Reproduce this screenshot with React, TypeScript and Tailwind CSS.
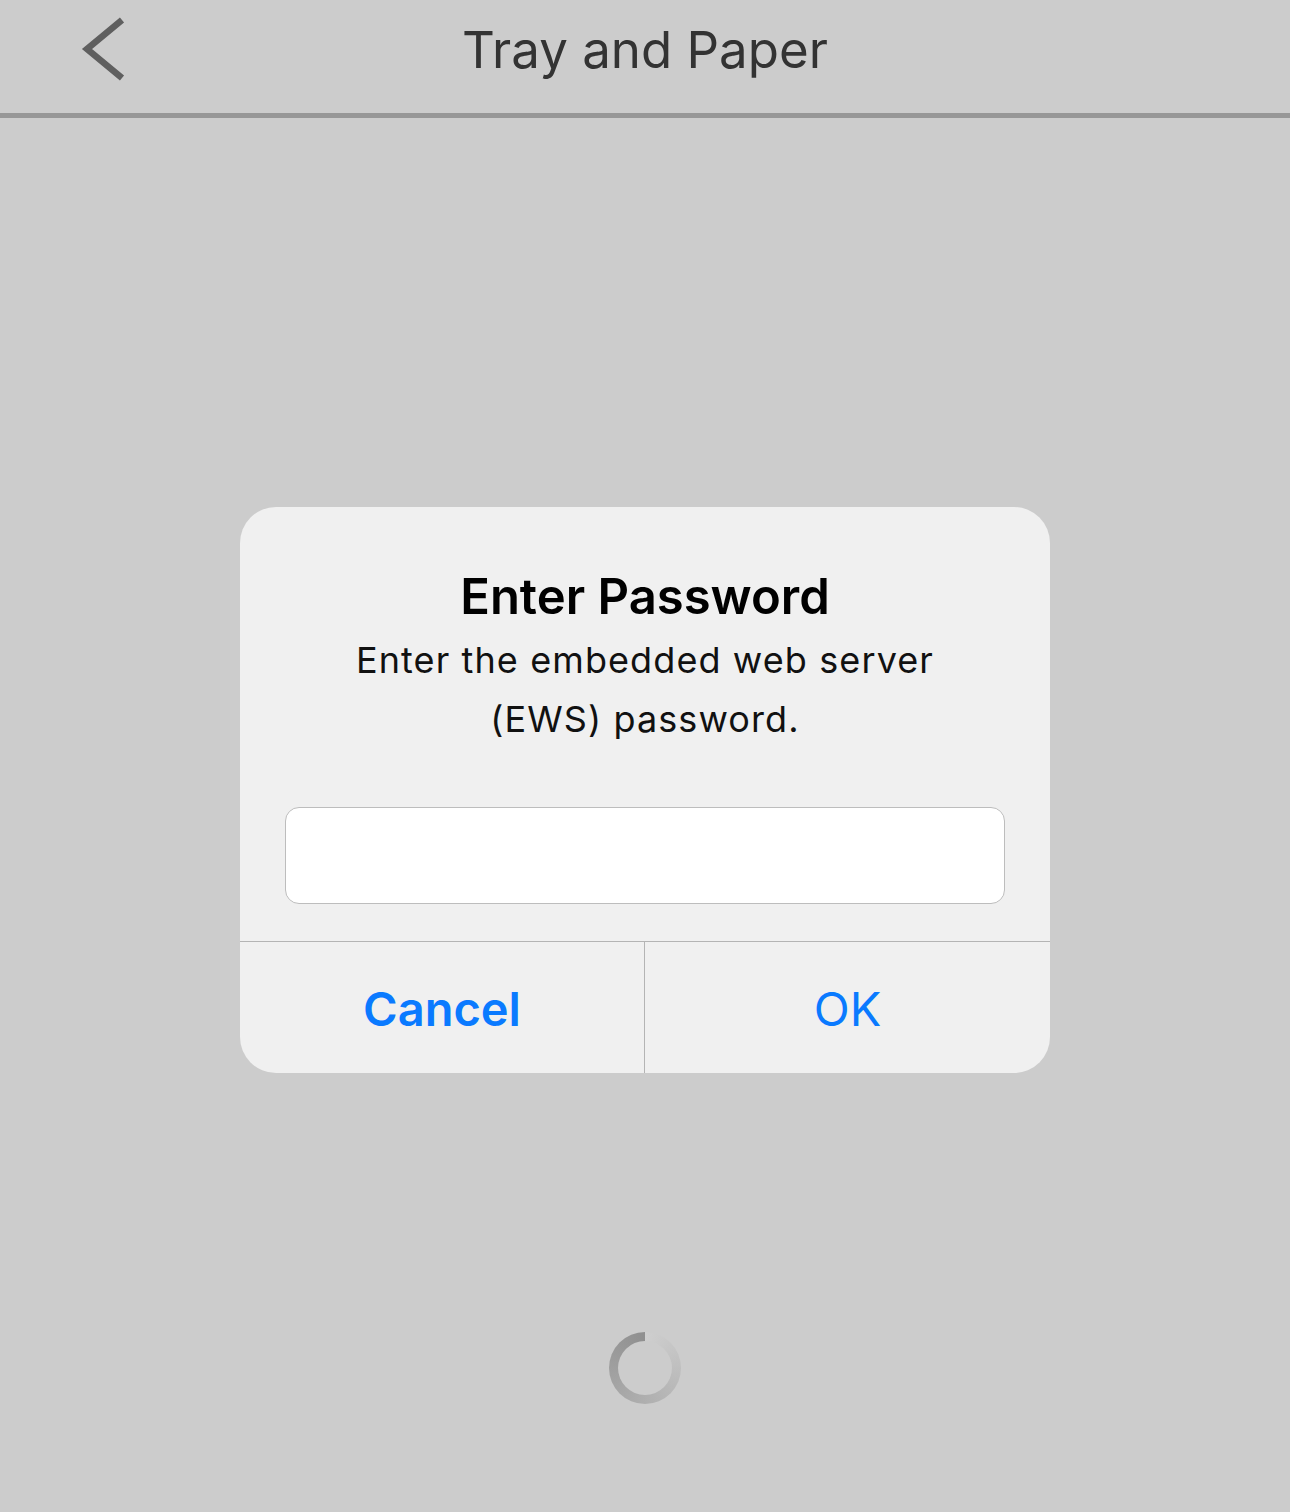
export default function App() {
  return (
    <div className="flex min-h-[1512px] w-full flex-col bg-[#cccccc] font-['Inter','Liberation_Sans',sans-serif]">
      {/* nav bar */}
      <header className="relative flex h-[118px] items-center justify-center border-b-[5px] border-[#979797]">
        <button className="absolute left-[78px] top-[14px] flex h-[72px] w-[52px] items-center justify-center">
          <svg width="52" height="72" viewBox="0 0 52 72" fill="none">
            <polyline points="44,6 9,35 44,64" stroke="#5f5f5f" strokeWidth="6.5" strokeLinejoin="miter" />
          </svg>
        </button>
        <h1 className="mb-[14px] text-[51px] leading-none text-[#333333]">Tray and Paper</h1>
      </header>

      <main className="flex flex-col items-center pt-[389px]">
        {/* alert */}
        <div className="flex w-[810px] flex-col overflow-hidden rounded-[36px] bg-[#f0f0f0]">
          <div className="flex flex-col items-center px-[45px] pb-[37px] pt-[60px]">
            <h2 className="text-[49px] font-semibold leading-[60px] text-black">Enter Password</h2>
            <p className="mt-[4px] text-center text-[36px] leading-[59px] tracking-[1.1px] text-[#111111]">
              Enter the embedded web server
              <br />
              (EWS) password.
            </p>
            <input
              type="password"
              className="mt-[58px] h-[97px] w-full rounded-[14px] border border-[#bdbdbd] bg-white px-4 text-[34px] outline-none"
            />
          </div>
          <div className="grid h-[132px] grid-cols-2 border-t border-[#b4b4b4]">
            <button className="flex items-center justify-center border-r border-[#b4b4b4] pt-[4px] text-[47px] font-semibold text-[#0a7aff]">
              Cancel
            </button>
            <button className="flex items-center justify-center pt-[4px] text-[47px] text-[#0a7aff]">OK</button>
          </div>
        </div>

        {/* loading spinner */}
        <div className="mt-[259px] flex h-[72px] w-[72px] items-center justify-center rounded-full bg-[conic-gradient(from_0deg,#cfcfcf,#8f8f8f)]">
          <div className="h-[54px] w-[54px] rounded-full bg-[#cccccc]" />
        </div>
      </main>
    </div>
  );
}
